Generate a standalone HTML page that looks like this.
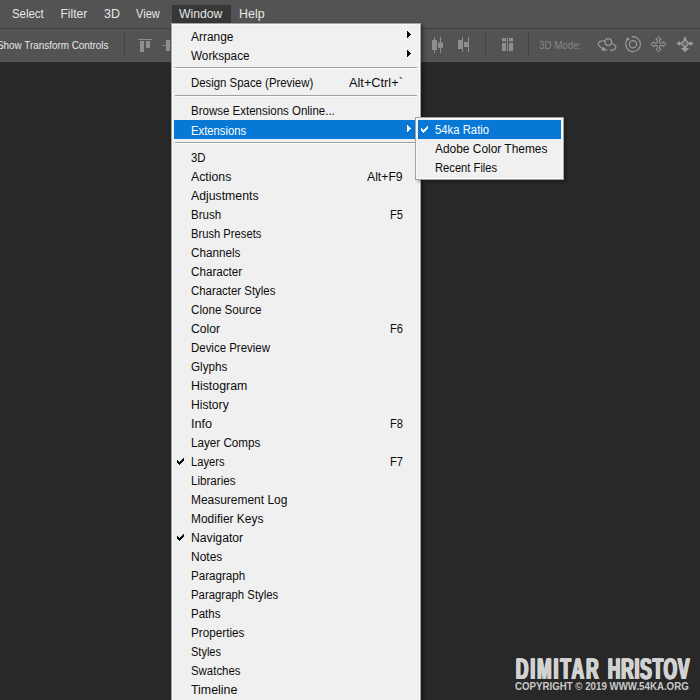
<!DOCTYPE html>
<html lang="en"><head><meta charset="utf-8"><title>Window menu - Extensions</title>
<style>
html,body{margin:0;padding:0}
body{width:700px;height:700px;overflow:hidden;background:#282828;position:relative;font-family:"Liberation Sans",sans-serif;font-size:12px}
.a{position:absolute}
.t{position:absolute;height:19px;line-height:19px;white-space:nowrap;transform-origin:0 0}
#menubar{left:0;top:0;width:700px;height:28px;background:#535353}
#barline{left:0;top:28px;width:700px;height:1px;background:#404040}
#optbar{left:0;top:29px;width:700px;height:33px;background:#535353}
#winbtn{left:172px;top:5px;width:59px;height:18px;background:#373737}
#menu{left:171px;top:23px;width:250px;height:690px;background:#f0f0f0;border:1px solid #a2a2a2;box-sizing:border-box;box-shadow:inset 0 0 0 1px #f8f8f8,2px 2px 4px rgba(0,0,0,.45)}
.sep{position:absolute;left:175px;width:242px;height:1px;background:#a0a0a0;box-shadow:0 1px 0 #fdfdfd}
.hl{position:absolute;background:#0878d7}
#sub{left:415px;top:117px;width:149px;height:63px;background:#f0f0f0;border:1px solid #a2a2a2;box-sizing:border-box;box-shadow:inset 0 0 0 1px #f8f8f8,2px 2px 3px rgba(0,0,0,.3)}
.vs{position:absolute;top:32px;width:1px;height:24px;background:#464646}
svg{position:absolute;overflow:visible}
</style></head><body>
<div class="a" id="menubar"></div>
<div class="a" id="barline"></div>
<div class="a" id="optbar"></div>
<div class="a" id="winbtn"></div>
<div class="vs" style="left:124px"></div>
<div class="vs" style="left:485px"></div>
<div class="vs" style="left:528px"></div>
<svg style="left:0;top:0" width="700" height="64" viewBox="0 0 700 64">
<g fill="#8e8e8e">
<rect x="138" y="39" width="14" height="1"/><rect x="140" y="41" width="4" height="11"/><rect x="146" y="41" width="4" height="7"/>
<rect x="163" y="45" width="9" height="1"/><rect x="166" y="40" width="4" height="11"/>
<rect x="434" y="37" width="1" height="16"/><rect x="432" y="40" width="5" height="10"/><rect x="440" y="37" width="1" height="16"/><rect x="438" y="42.5" width="5" height="5.5"/>
<rect x="462" y="37" width="1" height="15"/><rect x="458" y="40" width="4" height="9"/><rect x="468" y="37" width="1" height="15"/><rect x="464" y="42" width="4" height="5"/>
<rect x="507" y="37.5" width="1" height="14"/><rect x="502" y="38" width="4" height="3.5"/><rect x="502" y="43" width="4" height="8"/><rect x="509" y="38" width="4" height="3.5"/><rect x="509" y="43" width="4" height="8"/>
</g>
<g fill="none" stroke="#9a9a9a" stroke-width="1.2">
<circle cx="608.3" cy="42" r="3.3"/>
<path d="M605 40.8 C600.6 40.4 597.6 42.4 598.4 44.6 C598.9 46.2 600.6 47.6 602.8 48.6"/>
<path d="M611.7 43 C614.6 44.4 616.4 46.4 615.6 48.2 C614.9 49.8 612.6 50.4 610 50.3"/>
<path d="M631.5 36.9 A7.4 7.4 0 1 1 626.3 41.1"/>
<circle cx="633" cy="44.3" r="3.6"/>
<path d="M658.5 36.7 L661.2 39.6 L659.7 39.6 L659.7 43.1 L663.2 43.1 L663.2 41.6 L666.1 44.3 L663.2 47 L663.2 45.5 L659.7 45.5 L659.7 49 L661.2 49 L658.5 51.9 L655.8 49 L657.3 49 L657.3 45.5 L653.8 45.5 L653.8 47 L650.9 44.3 L653.8 41.6 L653.8 43.1 L657.3 43.1 L657.3 39.6 L655.8 39.6 Z" stroke-width="1"/>
<circle cx="685" cy="43.5" r="2.9" fill="#6a6a6a"/>
</g>
<g fill="#9a9a9a">
<path d="M601.2 50.4 L607.8 50.7 L603.2 47 Z"/>
<path d="M625.8 41.2 L626.9 37 L630 39.5 Z"/>
<path d="M685 36.6 L687 39.4 L686 39.4 L686 40.6 L684 40.6 L684 39.4 L683 39.4 Z"/>
<path d="M676.4 43.5 L680 41 L680 42.4 L682 42.4 L682 44.6 L680 44.6 L680 46 Z"/>
<path d="M693.6 43.5 L690 41 L690 42.4 L688 42.4 L688 44.6 L690 44.6 L690 46 Z"/>
<path d="M685 52.2 L680.8 48 L683.4 48 L683.4 46.4 L686.6 46.4 L686.6 48 L689.2 48 Z"/>
</g>
</svg>

<div class="a" id="menu"></div>
<div class="hl" style="left:174px;top:120px;width:241px;height:19px"></div>
<div class="sep" style="top:67px"></div>
<div class="sep" style="top:95px"></div>
<div class="sep" style="top:142px"></div>
<div class="a" id="sub"></div>
<div class="hl" style="left:418px;top:120px;width:143px;height:19px"></div>

<svg style="left:407px;top:31px" width="4" height="7" viewBox="0 0 4 7" shape-rendering="crispEdges"><path d="M0 0h1v1h1v1h1v1h1v1h-1v1h-1v1h-1v1h-1z" fill="#0c0c0c"/></svg>
<svg style="left:407px;top:50px" width="4" height="7" viewBox="0 0 4 7" shape-rendering="crispEdges"><path d="M0 0h1v1h1v1h1v1h1v1h-1v1h-1v1h-1v1h-1z" fill="#0c0c0c"/></svg>
<svg style="left:407px;top:125px" width="4" height="7" viewBox="0 0 4 7" shape-rendering="crispEdges"><path d="M0 0h1v1h1v1h1v1h1v1h-1v1h-1v1h-1v1h-1z" fill="#fff"/></svg>
<svg style="left:177px;top:458px" width="7" height="7" viewBox="0 0 7 7" shape-rendering="crispEdges"><path d="M0 2h1v3h-1zM1 3h1v3h-1zM2 4h1v3h-1zM3 3h1v3h-1zM4 2h1v3h-1zM5 1h1v3h-1zM6 0h1v3h-1z" fill="#0c0c0c"/></svg>
<svg style="left:177px;top:534px" width="7" height="7" viewBox="0 0 7 7" shape-rendering="crispEdges"><path d="M0 2h1v3h-1zM1 3h1v3h-1zM2 4h1v3h-1zM3 3h1v3h-1zM4 2h1v3h-1zM5 1h1v3h-1zM6 0h1v3h-1z" fill="#0c0c0c"/></svg>
<svg style="left:421px;top:126px" width="7" height="7" viewBox="0 0 7 7" shape-rendering="crispEdges"><path d="M0 2h1v3h-1zM1 3h1v3h-1zM2 4h1v3h-1zM3 3h1v3h-1zM4 2h1v3h-1zM5 1h1v3h-1zM6 0h1v3h-1z" fill="#fff"/></svg>
<div class="t" style="left:11.53px;top:5.0px;font-size:12px;color:#e6e6e6;transform:scaleX(0.9466)">Select</div>
<div class="t" style="left:60.50px;top:5.0px;font-size:12px;color:#e6e6e6;transform:scaleX(1.0000)">Filter</div>
<div class="t" style="left:103.73px;top:5.0px;font-size:12px;color:#e6e6e6;transform:scaleX(1.0351)">3D</div>
<div class="t" style="left:136.25px;top:5.0px;font-size:12px;color:#e6e6e6;transform:scaleX(0.9223)">View</div>
<div class="t" style="left:179.20px;top:5.0px;font-size:12px;color:#e6e6e6;transform:scaleX(1.0152)">Window</div>
<div class="t" style="left:239.36px;top:5.0px;font-size:12px;color:#e6e6e6;transform:scaleX(1.0366)">Help</div>
<div class="t" style="left:-2.65px;top:36.0px;font-size:11px;color:#e8e8e8;transform:scaleX(0.8982)">Show Transform Controls</div>
<div class="t" style="left:538.56px;top:36.3px;font-size:11px;color:#878787;transform:scaleX(0.8865)">3D Mode:</div>
<div class="t" style="left:191.00px;top:28.0px;font-size:12px;color:#0c0c0c;transform:scaleX(0.9941)">Arrange</div>
<div class="t" style="left:191.00px;top:47.0px;font-size:12px;color:#0c0c0c;transform:scaleX(0.9789)">Workspace</div>
<div class="t" style="left:191.00px;top:74.0px;font-size:12px;color:#0c0c0c;transform:scaleX(0.9492)">Design Space (Preview)</div>
<div class="t" style="left:349.30px;top:74.0px;font-size:12px;color:#0c0c0c;transform:scaleX(1.0633)">Alt+Ctrl+`</div>
<div class="t" style="left:191.00px;top:102.0px;font-size:12px;color:#0c0c0c;transform:scaleX(0.9581)">Browse Extensions Online...</div>
<div class="t" style="left:191.00px;top:122.0px;font-size:12px;color:#ffffff;transform:scaleX(0.9399)">Extensions</div>
<div class="t" style="left:191.00px;top:149.0px;font-size:12px;color:#0c0c0c;transform:scaleX(0.9492)">3D</div>
<div class="t" style="left:191.00px;top:168.0px;font-size:12px;color:#0c0c0c;transform:scaleX(1.0256)">Actions</div>
<div class="t" style="left:367.10px;top:168.0px;font-size:12px;color:#0c0c0c;transform:scaleX(1.0174)">Alt+F9</div>
<div class="t" style="left:191.00px;top:187.0px;font-size:12px;color:#0c0c0c;transform:scaleX(1.0229)">Adjustments</div>
<div class="t" style="left:191.00px;top:206.0px;font-size:12px;color:#0c0c0c;transform:scaleX(0.9626)">Brush</div>
<div class="t" style="left:389.67px;top:206.0px;font-size:12px;color:#0c0c0c;transform:scaleX(0.9280)">F5</div>
<div class="t" style="left:191.00px;top:225.0px;font-size:12px;color:#0c0c0c;transform:scaleX(0.9333)">Brush Presets</div>
<div class="t" style="left:191.00px;top:244.0px;font-size:12px;color:#0c0c0c;transform:scaleX(0.9751)">Channels</div>
<div class="t" style="left:191.00px;top:263.0px;font-size:12px;color:#0c0c0c;transform:scaleX(0.9714)">Character</div>
<div class="t" style="left:191.00px;top:282.0px;font-size:12px;color:#0c0c0c;transform:scaleX(0.9518)">Character Styles</div>
<div class="t" style="left:191.00px;top:301.0px;font-size:12px;color:#0c0c0c;transform:scaleX(0.9689)">Clone Source</div>
<div class="t" style="left:191.00px;top:320.0px;font-size:12px;color:#0c0c0c;transform:scaleX(1.0175)">Color</div>
<div class="t" style="left:389.67px;top:320.0px;font-size:12px;color:#0c0c0c;transform:scaleX(0.9280)">F6</div>
<div class="t" style="left:191.00px;top:339.0px;font-size:12px;color:#0c0c0c;transform:scaleX(0.9547)">Device Preview</div>
<div class="t" style="left:191.00px;top:358.0px;font-size:12px;color:#0c0c0c;transform:scaleX(0.9730)">Glyphs</div>
<div class="t" style="left:191.00px;top:377.0px;font-size:12px;color:#0c0c0c;transform:scaleX(1.0296)">Histogram</div>
<div class="t" style="left:191.00px;top:396.0px;font-size:12px;color:#0c0c0c;transform:scaleX(1.0094)">History</div>
<div class="t" style="left:191.00px;top:415.0px;font-size:12px;color:#0c0c0c;transform:scaleX(1.0564)">Info</div>
<div class="t" style="left:389.67px;top:415.0px;font-size:12px;color:#0c0c0c;transform:scaleX(0.9280)">F8</div>
<div class="t" style="left:191.00px;top:434.0px;font-size:12px;color:#0c0c0c;transform:scaleX(0.9718)">Layer Comps</div>
<div class="t" style="left:191.00px;top:453.0px;font-size:12px;color:#0c0c0c;transform:scaleX(0.9296)">Layers</div>
<div class="t" style="left:389.67px;top:453.0px;font-size:12px;color:#0c0c0c;transform:scaleX(0.9280)">F7</div>
<div class="t" style="left:191.00px;top:472.0px;font-size:12px;color:#0c0c0c;transform:scaleX(0.9670)">Libraries</div>
<div class="t" style="left:191.00px;top:491.0px;font-size:12px;color:#0c0c0c;transform:scaleX(0.9958)">Measurement Log</div>
<div class="t" style="left:191.00px;top:510.0px;font-size:12px;color:#0c0c0c;transform:scaleX(0.9965)">Modifier Keys</div>
<div class="t" style="left:191.00px;top:529.0px;font-size:12px;color:#0c0c0c;transform:scaleX(1.0146)">Navigator</div>
<div class="t" style="left:191.00px;top:548.0px;font-size:12px;color:#0c0c0c;transform:scaleX(1.0000)">Notes</div>
<div class="t" style="left:191.00px;top:567.0px;font-size:12px;color:#0c0c0c;transform:scaleX(0.9665)">Paragraph</div>
<div class="t" style="left:191.00px;top:586.0px;font-size:12px;color:#0c0c0c;transform:scaleX(0.9482)">Paragraph Styles</div>
<div class="t" style="left:191.00px;top:605.0px;font-size:12px;color:#0c0c0c;transform:scaleX(0.9587)">Paths</div>
<div class="t" style="left:191.00px;top:624.0px;font-size:12px;color:#0c0c0c;transform:scaleX(0.9770)">Properties</div>
<div class="t" style="left:191.00px;top:643.0px;font-size:12px;color:#0c0c0c;transform:scaleX(0.9178)">Styles</div>
<div class="t" style="left:191.00px;top:662.0px;font-size:12px;color:#0c0c0c;transform:scaleX(0.9515)">Swatches</div>
<div class="t" style="left:191.00px;top:681.0px;font-size:12px;color:#0c0c0c;transform:scaleX(1.0337)">Timeline</div>
<div class="t" style="left:435.00px;top:121.0px;font-size:12px;color:#ffffff;transform:scaleX(0.9430)">54ka Ratio</div>
<div class="t" style="left:435.00px;top:140.0px;font-size:12px;color:#0c0c0c;transform:scaleX(0.9933)">Adobe Color Themes</div>
<div class="t" style="left:435.00px;top:159.0px;font-size:12px;color:#0c0c0c;transform:scaleX(0.9321)">Recent Files</div>
<div class="t" style="left:514.54px;top:649.5px;font-weight:bold;text-rendering:geometricPrecision;font-size:29.8px;line-height:40px;height:40px;letter-spacing:3.45px;color:#d2d2d2;text-shadow:0.75px 0 0 #d2d2d2,1.5px 0 0 #d2d2d2,2.25px 0 0 #d2d2d2,3px 0 0 #d2d2d2;transform:scale(0.5800,1.004)">DIMITAR</div>
<div class="t" style="left:606.74px;top:649.5px;font-weight:bold;text-rendering:geometricPrecision;font-size:29.8px;line-height:40px;height:40px;letter-spacing:1.47px;color:#d2d2d2;text-shadow:0.75px 0 0 #d2d2d2,1.5px 0 0 #d2d2d2,2.25px 0 0 #d2d2d2,3px 0 0 #d2d2d2;transform:scale(0.5800,1.004)">HRISTOV</div>
<div class="t" style="left:515.46px;top:680.5px;font-weight:bold;font-size:10px;line-height:12px;height:12px;color:#cacaca;transform:scaleX(0.9700)">COPYRIGHT © 2019 WWW.54KA.ORG</div>
</body></html>
